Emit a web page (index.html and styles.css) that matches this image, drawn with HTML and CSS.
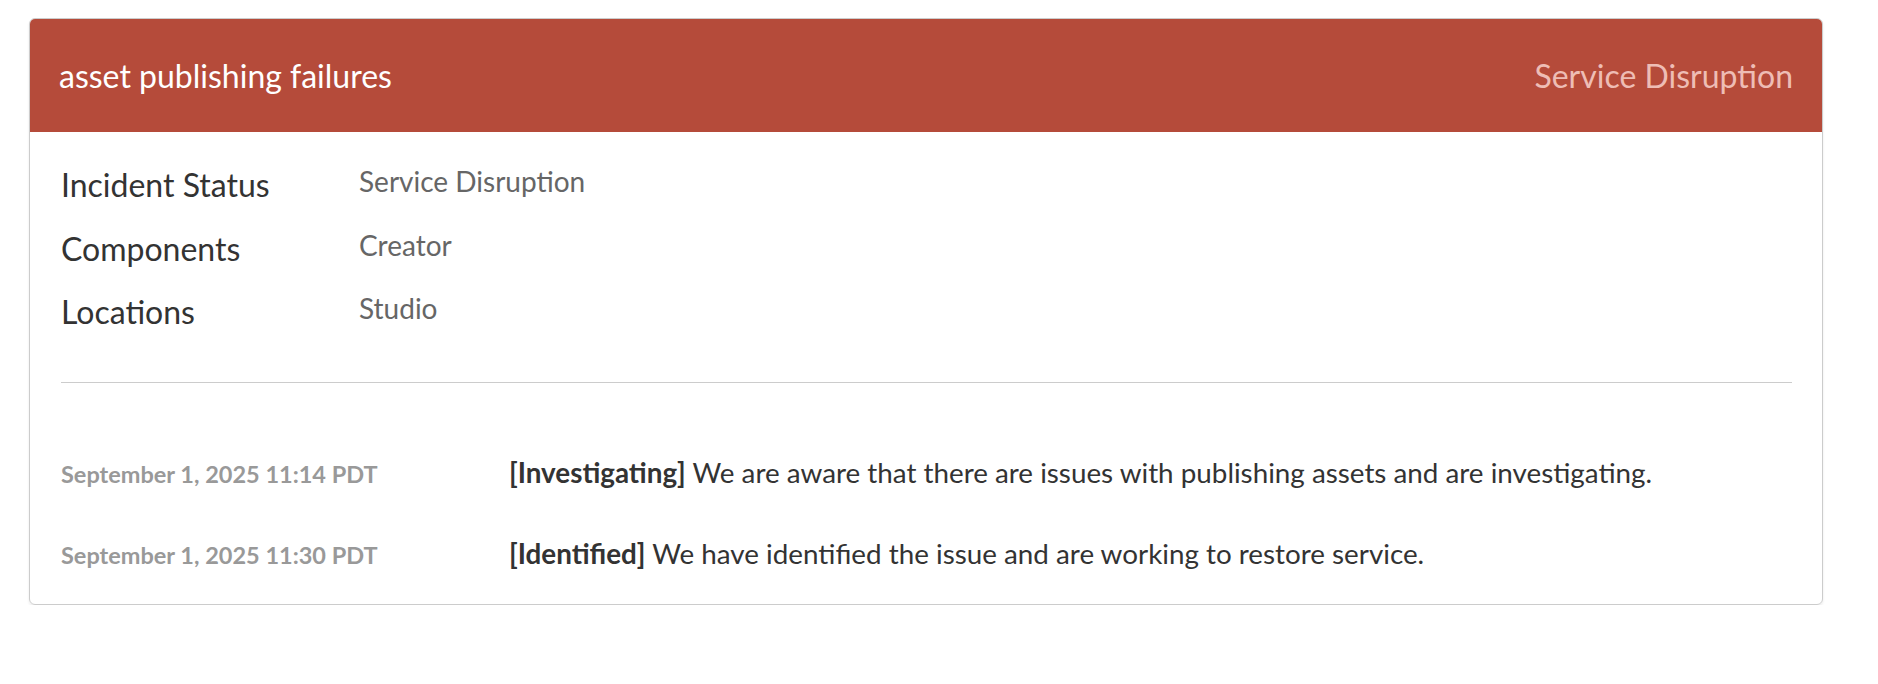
FILE: index.html
```html
<!DOCTYPE html>
<html>
<head>
<meta charset="utf-8">
<link rel="stylesheet" href="styles.css">
</head>
<body>
<div class="card">
  <div class="card-header">
    <div class="title">asset publishing failures</div>
    <div class="impact">Service Disruption</div>
  </div>
  <div class="card-body">
    <div class="details">
      <div class="label">Incident Status</div><div class="value">Service Disruption</div>
      <div class="label">Components</div><div class="value">Creator</div>
      <div class="label">Locations</div><div class="value">Studio</div>
    </div>
    <hr class="divider">
    <div class="updates">
      <div class="update">
        <div class="date">September 1, 2025 11:14 PDT</div>
        <div class="message"><strong>[Investigating]</strong> We are aware that there are issues with publishing assets and are investigating.</div>
      </div>
      <div class="update">
        <div class="date">September 1, 2025 11:30 PDT</div>
        <div class="message"><strong>[Identified]</strong> We have identified the issue and are working to restore service.</div>
      </div>
    </div>
  </div>
</div>
</body>
</html>
```
FILE: styles.css
```css
html, body {
  margin: 0;
  background: #ffffff;
}
body {
  font-family: Lato, "Open Sans", sans-serif;
  padding: 18px 55px 0 29px;
  color: #333333;
}
.card {
  border: 1px solid #cccccc;
  border-radius: 6px;
  box-shadow: 0 2px 3px rgba(0, 0, 0, 0.08);
  overflow: hidden;
}
.card-header {
  height: 113px;
  background: #b54b3a;
  display: flex;
  align-items: center;
  justify-content: space-between;
  padding: 0 29px 0 29px;
}
.title {
  color: #ffffff;
  font-size: 32px;
}
.impact {
  color: #eebdb5;
  font-size: 32px;
}
.card-body {
  padding: 21px 30px 9px 31px;
}
.details {
  display: grid;
  grid-template-columns: 298px 1fr;
  line-height: 63.5px;
}
.label {
  font-size: 32px;
  color: #333333;
}
.value {
  font-size: 28px;
  line-height: 56px;
  color: #666666;
}
.divider {
  border: 0;
  border-top: 1px solid #cccccc;
  margin: 38px 0 0 0;
}
.updates {
  padding-top: 50px;
}
.update {
  display: flex;
  align-items: baseline;
  line-height: 80px;
}
.date {
  width: 448px;
  flex: none;
  font-size: 23.5px;
  font-weight: 700;
  color: #999999;
}
.message {
  font-size: 27.8px;
  color: #333333;
}
.message strong {
  font-weight: 700;
}
```
